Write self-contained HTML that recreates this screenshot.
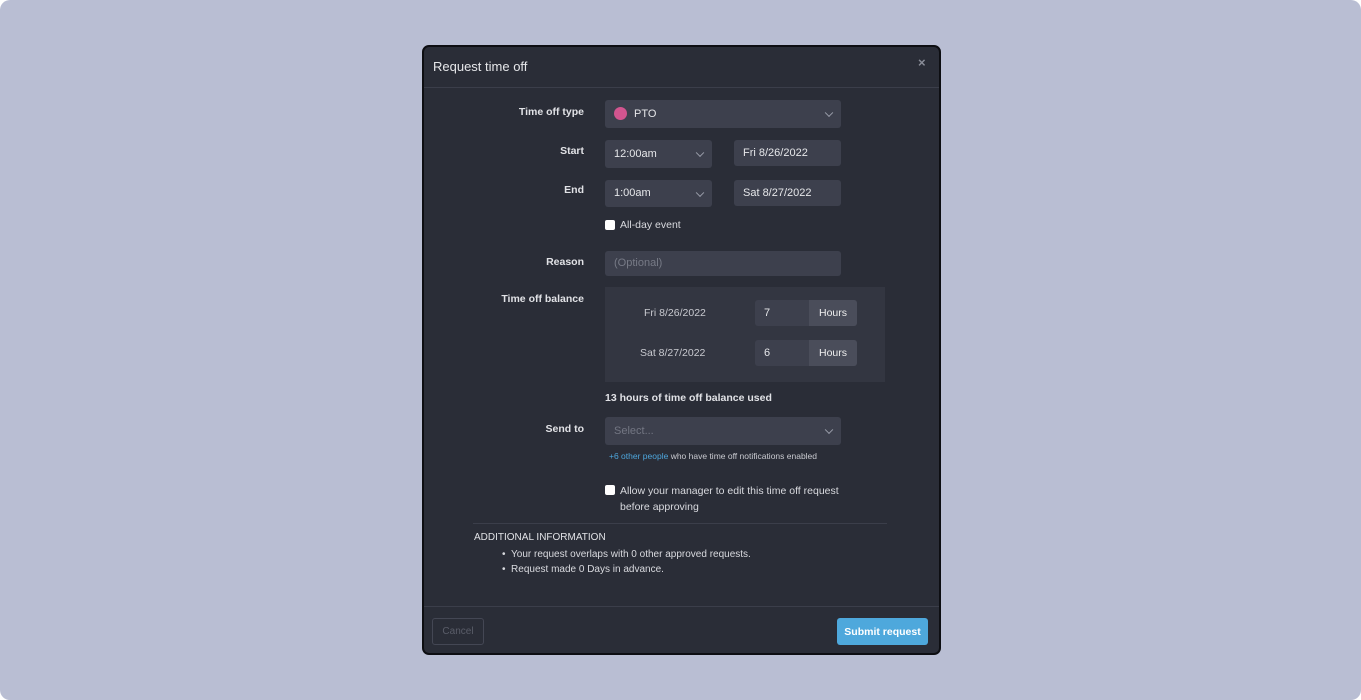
<!DOCTYPE html>
<html><head><style>
*{box-sizing:border-box;margin:0;padding:0}
body{width:1361px;height:700px;background:#fff;font-family:"Liberation Sans",sans-serif;position:relative;overflow:hidden}
.bg{position:absolute;left:0;top:0;width:1361px;height:700px;background:#b9bed3;border-radius:10px}
.m{position:absolute;left:422px;top:45px;width:519px;height:610px;background:#2a2d37;border:2px solid #0d0e12;border-radius:7px}
.a{position:absolute}
.t{color:#e6e7ea;font-size:13px}
.l{color:#e1e2e6;font-size:10.5px;font-weight:bold;text-align:right;width:120px}
.in{background:#3d404d;border-radius:3px;color:#e6e7ea;font-size:11px;padding-left:9px;display:flex;align-items:center;padding-bottom:1px}
.chev{position:absolute;right:9px;top:50%;width:6px;height:6px;border-right:1.3px solid #9a9daa;border-bottom:1.3px solid #9a9daa;transform:translateY(-70%) rotate(45deg)}
.cb{width:10px;height:10px;background:#fff;border-radius:2px}
.s{color:#d9dadf;font-size:10.5px}
</style></head><body>
<div class="bg"></div>
<div class="m">
<div class="a t" style="left:9px;top:12px">Request time off</div>
<div class="a" style="left:494px;top:8px;color:#8a8d98;font-size:13px;font-weight:bold">×</div>
<div class="a" style="left:0;top:40px;width:515px;height:1px;background:#3b3e4a"></div>

<div class="a l" style="left:40px;top:59px">Time off type</div>
<div class="a in" style="left:181px;top:53px;width:236px;height:28px"><span style="width:13px;height:13px;border-radius:50%;background:#d2558f;margin-right:7px"></span>PTO<i class="chev"></i></div>

<div class="a l" style="left:40px;top:98px">Start</div>
<div class="a in" style="left:181px;top:93px;width:107px;height:28px">12:00am<i class="chev"></i></div>
<div class="a in" style="left:310px;top:93px;width:107px;height:26px">Fri 8/26/2022</div>

<div class="a l" style="left:40px;top:137px">End</div>
<div class="a in" style="left:181px;top:133px;width:107px;height:27px">1:00am<i class="chev"></i></div>
<div class="a in" style="left:310px;top:133px;width:107px;height:26px">Sat 8/27/2022</div>

<div class="a cb" style="left:181px;top:173px"></div>
<div class="a s" style="left:196px;top:172px">All-day event</div>

<div class="a l" style="left:40px;top:209px">Reason</div>
<div class="a in" style="left:181px;top:204px;width:236px;height:25px;color:#777a86">(Optional)</div>

<div class="a l" style="left:40px;top:246px">Time off balance</div>
<div class="a" style="left:181px;top:240px;width:280px;height:95px;background:#333641"></div>
<div class="a s" style="left:220px;top:260px;color:#c9cad0">Fri 8/26/2022</div>
<div class="a in" style="left:331px;top:253px;width:102px;height:26px">7</div>
<div class="a" style="left:385px;top:253px;width:48px;height:26px;background:#4a4d5a;border-radius:0 3px 3px 0;color:#eee;font-size:10.5px;display:flex;align-items:center;justify-content:center;padding-bottom:1px">Hours</div>
<div class="a s" style="left:216px;top:300px;color:#c9cad0">Sat 8/27/2022</div>
<div class="a in" style="left:331px;top:293px;width:102px;height:26px">6</div>
<div class="a" style="left:385px;top:293px;width:48px;height:26px;background:#4a4d5a;border-radius:0 3px 3px 0;color:#eee;font-size:10.5px;display:flex;align-items:center;justify-content:center;padding-bottom:1px">Hours</div>

<div class="a" style="left:181px;top:345px;color:#e1e2e6;font-size:10.5px;font-weight:bold">13 hours of time off balance used</div>

<div class="a l" style="left:40px;top:376px">Send to</div>
<div class="a in" style="left:181px;top:370px;width:236px;height:28px;color:#737683">Select...<i class="chev"></i></div>
<div class="a" style="left:185px;top:404px;font-size:8.5px;color:#c9cad0"><span style="color:#4ea6dc">+6 other people</span> who have time off notifications enabled</div>

<div class="a cb" style="left:181px;top:438px"></div>
<div class="a s" style="left:196px;top:436px;line-height:16px">Allow your manager to edit this time off request<br>before approving</div>

<div class="a" style="left:49px;top:476px;width:414px;height:1px;background:#3b3e4a"></div>
<div class="a" style="left:50px;top:485px;font-size:10px;color:#e1e2e6">ADDITIONAL INFORMATION</div>
<div class="a" style="left:78px;top:500px;font-size:10px;color:#d9dadf;line-height:15px">•&nbsp;&nbsp;Your request overlaps with 0 other approved requests.<br>•&nbsp;&nbsp;Request made 0 Days in advance.</div>

<div class="a" style="left:0;top:559px;width:515px;height:1px;background:#3b3e4a"></div>
<div class="a" style="left:8px;top:571px;width:52px;height:27px;border:1px solid #444754;border-radius:3px;color:#5a5d69;font-size:10px;display:flex;align-items:center;justify-content:center">Cancel</div>
<div class="a" style="left:413px;top:571px;width:91px;height:27px;background:#4ea8dc;border-radius:3px;color:#fff;font-size:10.5px;font-weight:bold;display:flex;align-items:center;justify-content:center">Submit request</div>
</div>
</body></html>
